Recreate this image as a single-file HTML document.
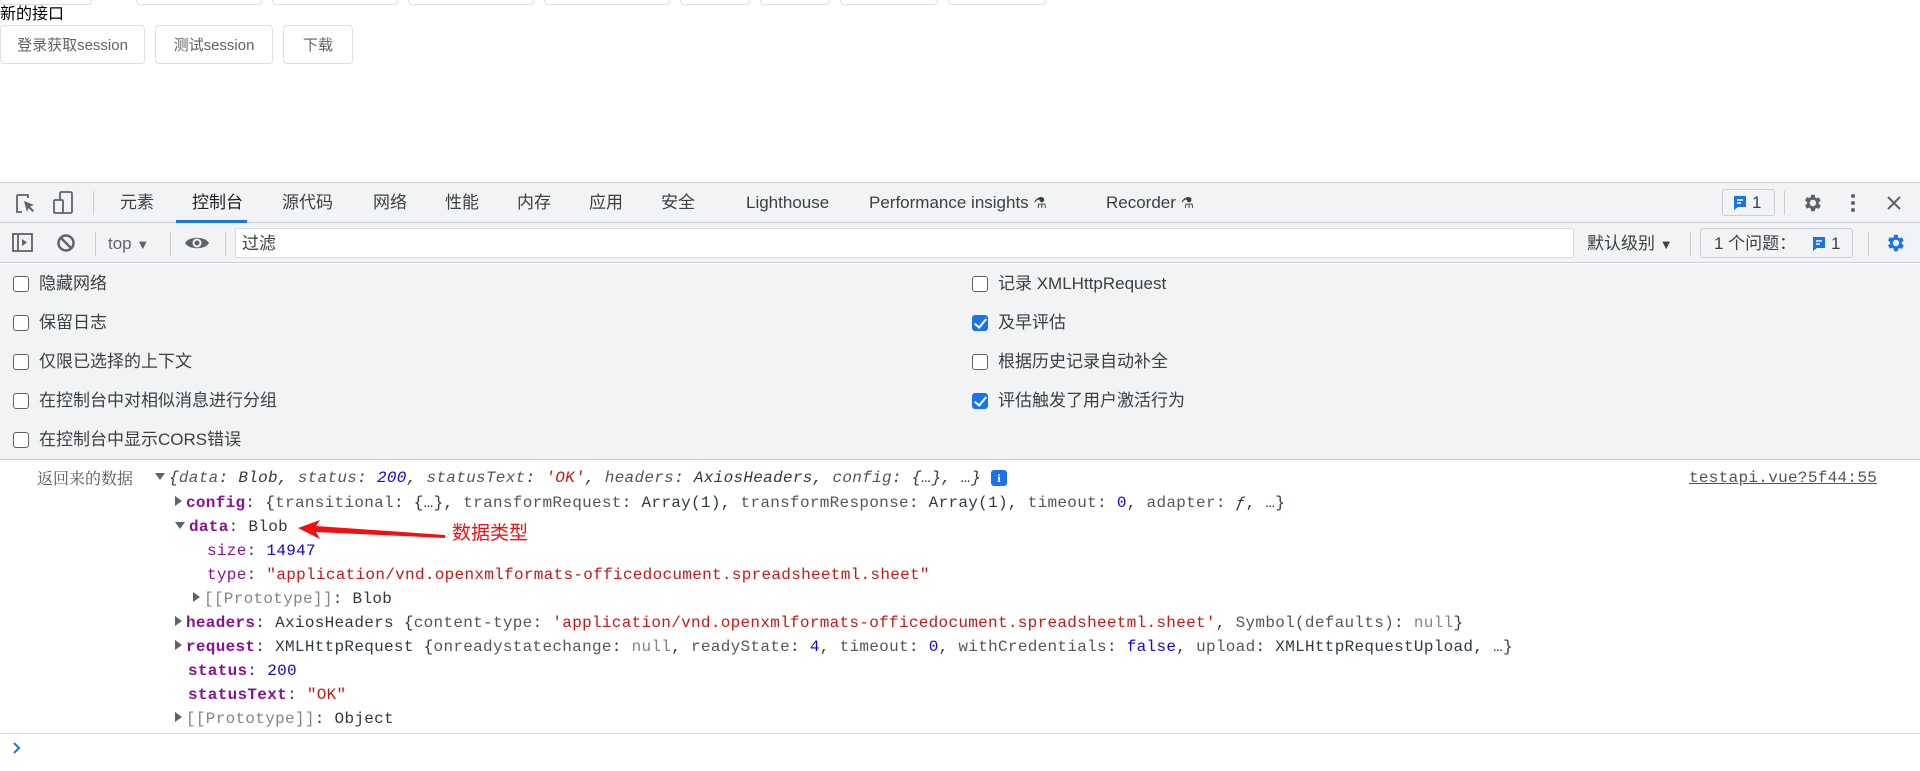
<!DOCTYPE html>
<html><head><meta charset="utf-8"><style>
*{margin:0;padding:0;box-sizing:border-box}
body{width:1920px;height:771px;overflow:hidden;background:#fff;position:relative;font-family:"Liberation Sans","Noto Sans CJK SC",sans-serif;}
.a{position:absolute;white-space:nowrap}
.btn{position:absolute;top:25px;height:39px;border:1px solid #dcdfe6;border-radius:4px;font-size:15px;color:#606266;display:flex;align-items:center;justify-content:center;background:#fff}
.tb{position:absolute;top:0;height:5px;border:1px solid #dcdfe6;border-top:none;border-radius:0 0 4px 4px}
.ui{font-size:17px;color:#3c4043;line-height:22px}
.cb{position:absolute;width:16px;height:16px;border:1.5px solid #5f6368;border-radius:3px;background:#fff}
.cb.on{background:#1a73e8;border-color:#1a73e8}
.cb.on:after{content:"";position:absolute;left:4px;top:0px;width:5px;height:10px;border:solid #fff;border-width:0 2px 2px 0;transform:rotate(40deg)}
.m{font-family:"Liberation Mono","Noto Sans CJK SC",monospace;font-size:16px;letter-spacing:0.3px;color:#303942;position:absolute;white-space:nowrap;line-height:24px}
.k{color:#565656}.kb{color:#881391;font-weight:bold}.s{color:#c41a16}.n{color:#1c00cf}.g{color:#80868b}
.tri{display:inline-block;width:0;height:0;border-left:7px solid #5f6368;border-top:5px solid transparent;border-bottom:5px solid transparent;margin-right:4px;vertical-align:1px}
.trd{display:inline-block;width:0;height:0;border-top:7px solid #5f6368;border-left:5px solid transparent;border-right:5px solid transparent;margin-right:4px;vertical-align:2px}
.sep{position:absolute;width:1px;background:#ccc}
</style></head><body>
<div class="tb" style="left:0;width:92px"></div>
<div class="tb" style="left:136px;width:126px"></div>
<div class="tb" style="left:272px;width:126px"></div>
<div class="tb" style="left:408px;width:126px"></div>
<div class="tb" style="left:544px;width:126px"></div>
<div class="tb" style="left:680px;width:70px"></div>
<div class="tb" style="left:760px;width:70px"></div>
<div class="tb" style="left:840px;width:98px"></div>
<div class="tb" style="left:948px;width:98px"></div>
<div class="a" style="left:0;top:6px;font-size:16px;line-height:18px;color:#000">新的接口</div>
<div class="btn" style="left:0;width:145px">登录获取session</div>
<div class="btn" style="left:155px;width:118px">测试session</div>
<div class="btn" style="left:283px;width:70px">下载</div>

<div class="a" style="left:0;top:182px;width:1920px;height:589px;background:#fff"></div>
<div class="a" style="left:0;top:182px;width:1920px;height:41px;background:#f1f3f4;border-top:1px solid #cacdd1;border-bottom:1px solid #cacdd1"></div>
<svg class="a" style="left:14px;top:192px" width="24" height="24" viewBox="0 0 24 24"><path d="M3 3h11v3M3 3v17h5" fill="none" stroke="#5f6368" stroke-width="1.8"/><path d="M10 9l10 4-4 1.5 4 4-1.5 1.5-4-4-1.5 4z" fill="#5f6368"/></svg>
<svg class="a" style="left:52px;top:190px" width="24" height="26" viewBox="0 0 24 26"><rect x="8" y="2" width="12" height="21" rx="1.5" fill="none" stroke="#5f6368" stroke-width="1.8"/><rect x="2" y="10" width="9" height="13" rx="1" fill="#f1f3f4" stroke="#5f6368" stroke-width="1.8"/></svg>
<div class="sep" style="left:93px;top:191px;height:24px"></div>
<div class="a ui" style="left:120px;top:192px">元素</div>
<div class="a ui" style="left:192px;top:192px;color:#202124">控制台</div>
<div class="a" style="left:176px;top:220px;width:71px;height:3px;background:#1a73e8"></div>
<div class="a ui" style="left:282px;top:192px">源代码</div>
<div class="a ui" style="left:373px;top:192px">网络</div>
<div class="a ui" style="left:445px;top:192px">性能</div>
<div class="a ui" style="left:517px;top:192px">内存</div>
<div class="a ui" style="left:589px;top:192px">应用</div>
<div class="a ui" style="left:661px;top:192px">安全</div>
<div class="a ui" style="left:746px;top:192px">Lighthouse</div>
<div class="a ui" style="left:869px;top:192px">Performance insights <span style="font-size:15px">&#x2697;</span></div>
<div class="a ui" style="left:1106px;top:192px">Recorder <span style="font-size:15px">&#x2697;</span></div>
<div class="a" style="left:1722px;top:189px;width:53px;height:27px;border:1px solid #cacdd1;border-radius:3px"></div>
<svg class="a" style="left:1732px;top:195px" width="16" height="16" viewBox="0 0 16 16"><path d="M2 1h12v11H6l-4 3z" fill="#1a73e8"/><path d="M5 5h6M5 8h4" stroke="#fff" stroke-width="1.5"/></svg>
<div class="a ui" style="left:1752px;top:192px">1</div>
<div class="sep" style="left:1784px;top:191px;height:24px"></div>
<svg class="a" style="left:1801px;top:192px" width="22" height="22" viewBox="0 0 24 24"><path fill="#5f6368" d="M19.4 13a7.5 7.5 0 000-2l2.1-1.6-2-3.5-2.5 1a7 7 0 00-1.7-1L15 3h-4l-.4 2.6a7 7 0 00-1.7 1l-2.5-1-2 3.5L6.6 11a7.5 7.5 0 000 2l-2.2 1.6 2 3.5 2.5-1a7 7 0 001.7 1L11 21h4l.4-2.6a7 7 0 001.7-1l2.5 1 2-3.5zM13 15.5a3.5 3.5 0 110-7 3.5 3.5 0 010 7z"/></svg>
<svg class="a" style="left:1851px;top:193px" width="4" height="20"><circle cx="2" cy="3" r="2" fill="#5f6368"/><circle cx="2" cy="10" r="2" fill="#5f6368"/><circle cx="2" cy="17" r="2" fill="#5f6368"/></svg>
<svg class="a" style="left:1887px;top:196px" width="14" height="14"><path d="M1 1l12 12M13 1L1 13" stroke="#5f6368" stroke-width="2"/></svg>

<div class="a" style="left:0;top:223px;width:1920px;height:40px;background:#f1f3f4;border-bottom:1px solid #cacdd1"></div>
<svg class="a" style="left:12px;top:233px" width="22" height="20"><rect x="1" y="1" width="19" height="17" fill="none" stroke="#5f6368" stroke-width="1.8"/><path d="M6 1v17" stroke="#5f6368" stroke-width="1.8"/><path d="M10 6l5 3.5-5 3.5z" fill="#5f6368"/></svg>
<svg class="a" style="left:56px;top:233px" width="20" height="20"><circle cx="10" cy="10" r="7.5" fill="none" stroke="#5f6368" stroke-width="2.5"/><path d="M5 5l10 10" stroke="#5f6368" stroke-width="2.5"/></svg>
<div class="sep" style="left:95px;top:232px;height:24px"></div>
<div class="a ui" style="left:108px;top:233px;color:#5f6368">top <span style="font-size:13px">&#9660;</span></div>
<div class="sep" style="left:170px;top:232px;height:24px"></div>
<svg class="a" style="left:184px;top:234px" width="26" height="18"><path d="M1 9C5 2 21 2 25 9 21 16 5 16 1 9z" fill="#5f6368"/><circle cx="13" cy="9" r="4.5" fill="#f1f3f4"/><circle cx="13" cy="9" r="2.5" fill="#5f6368"/></svg>
<div class="sep" style="left:225px;top:232px;height:24px"></div>
<div class="a" style="left:235px;top:228px;width:1339px;height:30px;background:#fff;border:1px solid #dadce0"></div>
<div class="a ui" style="left:242px;top:233px">过滤</div>
<div class="a ui" style="left:1587px;top:233px">默认级别 <span style="font-size:13px">&#9660;</span></div>
<div class="sep" style="left:1690px;top:232px;height:24px"></div>
<div class="a" style="left:1700px;top:228px;width:153px;height:30px;border:1px solid #cacdd1;border-radius:3px"></div>
<div class="a ui" style="left:1714px;top:233px">1 个问题：</div>
<svg class="a" style="left:1811px;top:236px" width="16" height="16" viewBox="0 0 16 16"><path d="M2 1h12v11H6l-4 3z" fill="#1a73e8"/><path d="M5 5h6M5 8h4" stroke="#fff" stroke-width="1.5"/></svg>
<div class="a ui" style="left:1831px;top:233px">1</div>
<div class="sep" style="left:1868px;top:232px;height:24px"></div>
<svg class="a" style="left:1884px;top:232px" width="22" height="22" viewBox="0 0 24 24"><path fill="#1a73e8" d="M19.4 13a7.5 7.5 0 000-2l2.1-1.6-2-3.5-2.5 1a7 7 0 00-1.7-1L15 3h-4l-.4 2.6a7 7 0 00-1.7 1l-2.5-1-2 3.5L6.6 11a7.5 7.5 0 000 2l-2.2 1.6 2 3.5 2.5-1a7 7 0 001.7 1L11 21h4l.4-2.6a7 7 0 001.7-1l2.5 1 2-3.5zM13 15.5a3.5 3.5 0 110-7 3.5 3.5 0 010 7z"/></svg>

<div class="a" style="left:0;top:264px;width:1920px;height:196px;background:#f1f3f4;border-bottom:1px solid #cacdd1"></div>
<div class="cb" style="left:13px;top:276px"></div><div class="a ui" style="left:39px;top:273px">隐藏网络</div>
<div class="cb" style="left:13px;top:315px"></div><div class="a ui" style="left:39px;top:312px">保留日志</div>
<div class="cb" style="left:13px;top:354px"></div><div class="a ui" style="left:39px;top:351px">仅限已选择的上下文</div>
<div class="cb" style="left:13px;top:393px"></div><div class="a ui" style="left:39px;top:390px">在控制台中对相似消息进行分组</div>
<div class="cb" style="left:13px;top:432px"></div><div class="a ui" style="left:39px;top:429px">在控制台中显示CORS错误</div>
<div class="cb" style="left:972px;top:276px"></div><div class="a ui" style="left:998px;top:273px">记录 XMLHttpRequest</div>
<div class="cb on" style="left:972px;top:315px"></div><div class="a ui" style="left:998px;top:312px">及早评估</div>
<div class="cb" style="left:972px;top:354px"></div><div class="a ui" style="left:998px;top:351px">根据历史记录自动补全</div>
<div class="cb on" style="left:972px;top:393px"></div><div class="a ui" style="left:998px;top:390px">评估触发了用户激活行为</div>

<div class="a" style="left:37px;top:467px;font-family:'Noto Serif CJK SC',serif;font-size:16px;color:#555;line-height:22px">返回来的数据</div>
<div class="m" style="left:155px;top:466px;font-style:italic"><span class="trd"></span>{<span class="k">data</span>: Blob, <span class="k">status</span>: <span class="n">200</span>, <span class="k">statusText</span>: <span class="s">'OK'</span>, <span class="k">headers</span>: AxiosHeaders, <span class="k">config</span>: {…}, …}</div>
<div class="a" style="left:991px;top:470px;width:16px;height:16px;background:#1a73e8;border-radius:3px;color:#fff;font-size:12px;font-weight:bold;text-align:center;line-height:16px;font-family:'Liberation Serif',serif">i</div>
<div class="m" style="left:1689px;top:466px;color:#545454;text-decoration:underline">testapi.vue?5f44:55</div>
<div class="m" style="left:175px;top:491px"><span class="tri"></span><span class="kb">config</span>: {<span class="k">transitional</span>: {…}, <span class="k">transformRequest</span>: Array(1), <span class="k">transformResponse</span>: Array(1), <span class="k">timeout</span>: <span class="n">0</span>, <span class="k">adapter</span>: <i>ƒ</i>, …}</div>
<div class="m" style="left:175px;top:515px"><span class="trd"></span><span class="kb">data</span>: Blob</div>
<div class="m" style="left:207px;top:539px"><span class="k" style="color:#881391">size</span>: <span class="n">14947</span></div>
<div class="m" style="left:207px;top:563px"><span class="k" style="color:#881391">type</span>: <span class="s">"application/vnd.openxmlformats-officedocument.spreadsheetml.sheet"</span></div>
<div class="m" style="left:193px;top:587px"><span class="tri"></span><span class="g">[[Prototype]]</span>: Blob</div>
<div class="m" style="left:175px;top:611px"><span class="tri"></span><span class="kb">headers</span>: AxiosHeaders {<span class="k">content-type</span>: <span class="s">'application/vnd.openxmlformats-officedocument.spreadsheetml.sheet'</span>, <span class="k">Symbol(defaults)</span>: <span class="g">null</span>}</div>
<div class="m" style="left:175px;top:635px"><span class="tri"></span><span class="kb">request</span>: XMLHttpRequest {<span class="k">onreadystatechange</span>: <span class="g">null</span>, <span class="k">readyState</span>: <span class="n">4</span>, <span class="k">timeout</span>: <span class="n">0</span>, <span class="k">withCredentials</span>: <span class="n">false</span>, <span class="k">upload</span>: XMLHttpRequestUpload, …}</div>
<div class="m" style="left:188px;top:659px"><span class="kb">status</span>: <span class="n">200</span></div>
<div class="m" style="left:188px;top:683px"><span class="kb">statusText</span>: <span class="s">"OK"</span></div>
<div class="m" style="left:175px;top:707px"><span class="tri"></span><span class="g">[[Prototype]]</span>: Object</div>
<svg class="a" style="left:290px;top:518px" width="160" height="24"><path d="M8 10L30 2 26 8 155 17 155 20 26 14 30 21z" fill="#f01010"/></svg>
<div class="a" style="left:452px;top:522px;font-size:19px;line-height:24px;color:#f01010">数据类型</div>
<div class="a" style="left:0;top:733px;width:1920px;height:1px;background:#e0e0e0"></div>
<svg class="a" style="left:12px;top:741px" width="10" height="14"><path d="M2 2l5 5-5 5" fill="none" stroke="#1a73e8" stroke-width="2"/></svg>
</body></html>
